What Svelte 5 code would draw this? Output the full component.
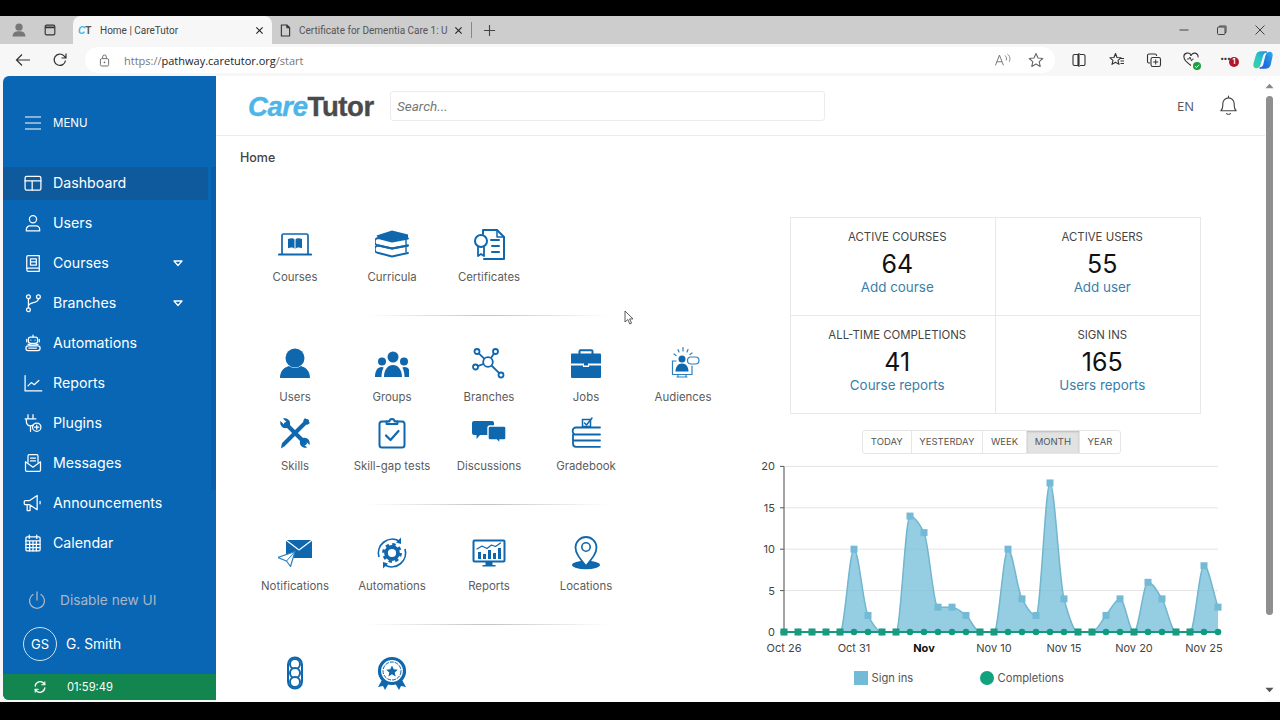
<script>
  const B = '#0f67ae';
  const line = (d, w = 1.8) => `<path d="${d}" fill="none" stroke="${B}" stroke-width="${w}" stroke-linecap="round" stroke-linejoin="round"/>`;
  const fill = (d) => `<path d="${d}" fill="${B}"/>`;
  const wline = (d, w = 1.5) => `<path d="${d}" fill="none" stroke="#fff" stroke-width="${w}" stroke-linecap="round" stroke-linejoin="round"/>`;

  const grid = {
    courses: line('M4 27V8.5a1.5 1.5 0 0 1 1.5-1.5h23a1.5 1.5 0 0 1 1.5 1.5V27', 1.7) + line('M1 27.5h32', 2.2) + fill('M10 12c2.8-1 5.5-1 6.5.6v9.2c-1.2-1.4-3.7-1.6-6.5-.6zM24 12c-2.8-1-5.5-1-6.5.6v9.2c1.2-1.4 3.7-1.6 6.5-.6z'),
    curricula: fill('M1.500 8.500 17 3.500 33 7.500V11L17 14 3 10.500z') + line('M33 11.500 17 14.500 3.500 11a3.400 3.400 0 0 0 0 7.500l13.500 3 16-3', 1.900) + line('M33 18.500 17 21.500 3.500 18.500a3.400 3.400 0 0 0 0 7.500l13.500 3.500 16-3.500', 1.900) + line('M31 12v6M31 19v6', 1.400),
    certificates: line('M11 7V3h14l7 7v22H12', 2) + line('M25 3v7h7', 1.5) + `<circle cx="9" cy="14" r="6" fill="none" stroke="${B}" stroke-width="2"/>` + line('M6 20v9l3-2 3 2v-9', 1.8) + line('M19 13h8M20 19h7M20 25h7', 2),
    users: `<circle cx="17" cy="11" r="9.500" fill="${B}"/>` + fill('M2 31c0-7 4-10.500 9-12 3.500 2.500 8.500 2.500 12 0 5 1.500 9 5 9 12z'),
    groups: `<circle cx="18" cy="10" r="5.500" fill="${B}"/><circle cx="7" cy="14.500" r="4" fill="${B}"/><circle cx="29" cy="14.500" r="4" fill="${B}"/>` + fill('M9 30c0-7.500 4-12 9-12s9 4.500 9 12zM0 30c0-6 2.500-10 6.500-10 1 0 1.500.2 2.200.6C7 23.500 6.500 27 6.500 30zM36 30c0-6-2.500-10-6.500-10-1 0-1.500.2-2.200.6C29 23.500 29.500 27 29.500 30z'),
    branches: `<g fill="none" stroke="${B}" stroke-width="1.800"><circle cx="16" cy="15" r="4.800"/><circle cx="5" cy="4.500" r="2.500"/><circle cx="23.500" cy="4.500" r="2.500"/><circle cx="3.500" cy="20" r="2.500"/><circle cx="29" cy="28" r="2.500"/><path d="M6.800 6.300 12.500 11.800M22 6.600 19 11M6 19.200 11.300 17M19.500 18.500 27.200 26.200"/></g>`,
    jobs: line('M10.500 7V4.200a1 1 0 0 1 1-1h11a1 1 0 0 1 1 1V7', 2) + fill('M2 7.500a1 1 0 0 1 1-1h28a1 1 0 0 1 1 1v9H2zM2 18.500h12v1.500h6v-1.500h12v11.500a1 1 0 0 1-1 1H3a1 1 0 0 1-1-1z') + `<rect x="15" y="15" width="4" height="3.500" fill="${B}"/>`,
    audiences: `<g fill="none" stroke="#2f7fbc" stroke-width="1.200" stroke-linecap="round"><path d="M10 14H6.500v13.500h19.500V19M12 27.500v2.500h8v-2.500M11 30h10"/><rect x="21.500" y="10" width="11.500" height="7" rx="3.500" fill="#fff"/><path d="M8 7 10 8.500M12 2.500l1 2.500M17 .5v3.500M22 2.500 21 5M26 6l-2 1.500"/></g><circle cx="16" cy="12" r="3.500" fill="${B}"/>` + fill('M9.500 24.500c0-4.500 2.500-8 6.500-8s6.500 3.500 6.500 8z'),
    skills: line('M29 5 6 28', 4) + fill('M3 32.500 4 27l3 3z') + `<path d="M27 2l5 5-3 2-4-4z" fill="${B}"/>` + line('M8 8 27 27', 4) + `<path d="M5 2.500 8.500 6 6 8.500 2.500 5C1.500 8 3.500 13 9 12l3-3c1-5.500-4-7.500-7-6.500zM31.500 29 27.500 25l-2.500 2.500 4 4c-3 1-8-1-7-6.500l3-3c5.500-1 7.500 4 6.500 7.500z" fill="${B}"/>`,
    tests: `<rect x="4.500" y="5.500" width="25" height="26" rx="2.500" fill="none" stroke="${B}" stroke-width="2"/><path d="M11.500 8V5.500H14.500a2.500 2.500 0 0 1 5 0H22.500V8z" fill="#fff" stroke="${B}" stroke-width="1.800" stroke-linejoin="round"/>` + line('M11 19.500l4.500 4.500 8-9', 2.2),
    discussions: fill('M2 5h18a2 2 0 0 1 2 2v10a2 2 0 0 1-2 2H8l-3.500 4v-4H2a2 2 0 0 1-2-2V7a2 2 0 0 1 2-2z') + `<path d="M18 10h14a2 2 0 0 1 2 2v10a2 2 0 0 1-2 2h-4v3.500L24.500 24H18a2 2 0 0 1-2-2V12a2 2 0 0 1 2-2z" fill="${B}" stroke="#fff" stroke-width="1.400"/>`,
    gradebook: line('M31 11.500H7a3.300 3.300 0 0 0-3.300 3.300v.4A3.300 3.300 0 0 0 7 18.500h24M4 18.500h27M4 18.500v9.300a3 3 0 0 0 3 3h24M4 24.500h27', 1.8) + `<rect x="13.500" y="3.500" width="8" height="7" fill="none" stroke="${B}" stroke-width="1.500"/>` + line('M15.500 7l2 2 5.500-7', 1.5),
    notifications: fill('M8 4h26v18H8z') + wline('M8.500 4.500 21 14 33.500 4.500', 1.2) + `<path d="M0 21.500 17 15.500 12.500 30.500 8.500 25z" fill="#fff" stroke="#2f7fbc" stroke-width="1.200" stroke-linejoin="round"/>` + `<path d="M8.500 25 17 15.500" stroke="#2f7fbc" stroke-width="1"/>`,
    automations: `<g fill="none" stroke="${B}"><circle cx="17" cy="17" r="8.600" stroke-width="2.600" stroke-dasharray="3.400 3.350"/><circle cx="17" cy="17" r="6" stroke-width="3.800"/><path d="M4 21A13.800 13.800 0 0 1 24 5M30 13A13.800 13.800 0 0 1 10 29" stroke-width="1.700"/></g>` + fill('M26 1.500V8l-5-1.500zM8 32.500V26l5 1.500z'),
    reports: `<rect x="1.500" y="4.500" width="31" height="21" rx="1" fill="none" stroke="${B}" stroke-width="2"/>` + fill('M13.500 26h7v3h3v1.500h-13V29h3zM6 16h3v7H6zM11 18h3v5h-3zM16 14h3v9h-3zM21 17h3v6h-3zM26 12h3v11h-3z') + line('M5 13l5-3 5 2.500 4.500-3.500 4 1.500 5-3.500', 1.2),
    locations: `<ellipse cx="17" cy="29" rx="14" ry="4.200" fill="${B}"/><path d="M17 30C10 21.500 6.500 17 6.500 11.500a10.500 10.500 0 0 1 21 0C27.500 17 24 21.500 17 30z" fill="#fff" stroke="${B}" stroke-width="1.800" stroke-linejoin="round"/><circle cx="17" cy="11" r="4.200" fill="none" stroke="${B}" stroke-width="1.600"/>`,
    chain: `<rect x="10" y="1.500" width="14" height="31" rx="7" fill="none" stroke="${B}" stroke-width="2"/><g fill="#fff" stroke="${B}" stroke-width="2"><circle cx="17" cy="8" r="5"/><circle cx="17" cy="17" r="5"/><circle cx="17" cy="26" r="5"/></g>`,
    badge: fill('M7 24 3 31l5-1 2 4 4-7zM27 24l4 7-5-1-2 4-4-7z') + `<circle cx="17" cy="15" r="12.500" fill="#fff" stroke="${B}" stroke-width="3.200"/><circle cx="17" cy="15" r="9" fill="none" stroke="${B}" stroke-width="1" stroke-dasharray="4 1"/><polygon points="17,9.500 18.700,13.300 22.800,13.700 19.700,16.400 20.600,20.500 17,18.300 13.400,20.500 14.300,16.400 11.200,13.700 15.300,13.300" fill="${B}"/>`
  };

  const sections = [
    [['courses', 'Courses'], ['curricula', 'Curricula'], ['certificates', 'Certificates']],
    [['users', 'Users'], ['groups', 'Groups'], ['branches', 'Branches'], ['jobs', 'Jobs'], ['audiences', 'Audiences'], ['skills', 'Skills'], ['tests', 'Skill-gap tests'], ['discussions', 'Discussions'], ['gradebook', 'Gradebook']],
    [['notifications', 'Notifications'], ['automations', 'Automations'], ['reports', 'Reports'], ['locations', 'Locations']],
    [['chain', ''], ['badge', '']]
  ];

  const nav = [
    { label: 'Dashboard', active: true, icon: '<rect x="2.500" y="4" width="19" height="16.500" rx="2"/><path d="M2.500 9.500h19M11 9.500v11"/>' },
    { label: 'Users', icon: '<circle cx="12" cy="7.500" r="4.300"/><path d="M4 21.500v-1.700a4.300 4.300 0 0 1 4.300-4.300h7.400a4.300 4.300 0 0 1 4.300 4.300v1.700z"/>' },
    { label: 'Courses', caret: true, icon: '<path d="M4.500 19V4.500a1.500 1.500 0 0 1 1.500-1.500h13.500v15H6.500a2 2 0 0 0 0 4h13v-4"/><path d="M9 7h7v7.500H9zM9 10.700h7"/>' },
    { label: 'Branches', caret: true, icon: '<circle cx="6.500" cy="4.500" r="2.300"/><circle cx="18.500" cy="4.500" r="2.300"/><circle cx="6.500" cy="20" r="2.300"/><path d="M6.500 6.800v10.900M18.500 6.800c0 6-12 3.500-12 9"/>' },
    { label: 'Automations', icon: '<rect x="6.500" y="5" width="11" height="7.500" rx="2.500"/><path d="M12 5V2.500M4.500 7.500v3M19.500 7.500v3M9.500 8.500h.01M14.500 8.500h.01M6 13.500c2 1.500 10 1.500 12 0"/><rect x="3.500" y="15.500" width="17" height="5.500" rx="2.700"/><path d="M7 18.200h10" stroke-dasharray="1.500 1"/>' },
    { label: 'Reports', icon: '<path d="M2.500 3v18.500h20M6 15.500l4-4 3.500 2.500 5.500-5"/>' },
    { label: 'Plugins', icon: '<path d="M6 2v4.500M12 2v4.500M2.500 7h13M4 7v3.500a5 5 0 0 0 5 5 5 5 0 0 0 3-1M9 15.500V22"/><circle cx="16.500" cy="17" r="5"/><path d="M16.500 14.500v5M14 17h5"/>' },
    { label: 'Messages', icon: '<path d="M6 11V3.500A1.500 1.500 0 0 1 7.500 2h9A1.500 1.500 0 0 1 18 3.500V11M9 6h6M9 9.500h6"/><path d="M3 10.500v10a1.500 1.500 0 0 0 1.500 1.500h15a1.500 1.500 0 0 0 1.500-1.500v-10L12 17z"/>' },
    { label: 'Announcements', icon: '<path d="M3 9h5l9-6v17l-9-6H3a1.500 1.500 0 0 1-1.500-1.500v-2A1.500 1.500 0 0 1 3 9zM5 14.500V21h3.500v-6.500M20.500 10v3"/>' },
    { label: 'Calendar', icon: '<rect x="3.500" y="4.500" width="17" height="17" rx="1.500"/><path d="M7.500 2.500v4M16.500 2.500v4M3.500 9.500h17M3.500 13.500h17M3.500 17.500h17M8 9.500v12M12 9.500v12M16 9.500v12"/>' }
  ];

  const stats = [
    ['ACTIVE COURSES', '64', 'Add course'],
    ['ACTIVE USERS', '55', 'Add user'],
    ['ALL-TIME COMPLETIONS', '41', 'Course reports'],
    ['SIGN INS', '165', 'Users reports']
  ];
  const ranges = ['TODAY', 'YESTERDAY', 'WEEK', 'MONTH', 'YEAR'];

  // chart
  const vals = [0,0,0,0,0,10,2,0,0,14,12,3,3,2,0,0,10,4,2,18,4,0,0,2,4,0,6,4,0,0,8,3];
  const X0 = 24, STEP = 14, Y0 = 174, UNIT = 8.28;
  const px = (i) => X0 + i * STEP;
  const py = (v) => Y0 - v * UNIT;
  const pts = vals.map((v, i) => [px(i), py(v)]);

  function monotone(p) {
    const n = p.length;
    const d = [], m = [];
    for (let i = 0; i < n - 1; i++) d[i] = (p[i + 1][1] - p[i][1]) / (p[i + 1][0] - p[i][0]);
    m[0] = d[0];
    m[n - 1] = d[n - 2];
    for (let i = 1; i < n - 1; i++) m[i] = d[i - 1] * d[i] <= 0 ? 0 : (2 * d[i - 1] * d[i]) / (d[i - 1] + d[i]);
    let s = `M${p[0][0]} ${p[0][1]}`;
    for (let i = 0; i < n - 1; i++) {
      const h = (p[i + 1][0] - p[i][0]) / 3;
      s += `C${p[i][0] + h} ${p[i][1] + m[i] * h} ${p[i + 1][0] - h} ${p[i + 1][1] - m[i + 1] * h} ${p[i + 1][0]} ${p[i + 1][1]}`;
    }
    return s;
  }
  const curve = monotone(pts);
  const area = `${curve}L${px(31)} ${Y0}L${X0} ${Y0}Z`;
  const yTicks = [0, 5, 10, 15, 20];
  const xTicks = [[0, 'Oct 26'], [5, 'Oct 31'], [10, 'Nov'], [15, 'Nov 10'], [20, 'Nov 15'], [25, 'Nov 20'], [30, 'Nov 25']];
</script>

<div class="screen">
  <div class="tabstrip">
    <svg class="cicon profile" viewBox="0 0 20 20"><circle cx="10" cy="6.500" r="4.500" fill="#777"/><path d="M2 18c0-5 3.500-6.500 8-6.500s8 1.500 8 6.500z" fill="#777"/></svg>
    <svg class="cicon tabs-btn" viewBox="0 0 16 16"><rect x="2.500" y="2.500" width="11" height="11" rx="1.500" fill="none" stroke="#333" stroke-width="1.300"/><path d="M2.500 5h11" stroke="#333" stroke-width="2"/></svg>
    <div class="tab active">
      <span class="fav"><i>C</i>T</span>
      <span class="tabtitle">Home | CareTutor</span>
      <svg class="close" viewBox="0 0 10 10"><path d="M1.500 1.500l7 7M8.500 1.500l-7 7" stroke="#222" stroke-width="1.200"/></svg>
    </div>
    <div class="tab second">
      <svg class="doc" viewBox="0 0 12 14"><path d="M1.500 1h6l3 3v9h-9zM7.500 1v3h3" fill="none" stroke="#333" stroke-width="1.200" stroke-linejoin="round"/></svg>
      <span class="tabtitle fade">Certificate for Dementia Care 1: U</span>
      <svg class="close" viewBox="0 0 10 10"><path d="M1.500 1.500l7 7M8.500 1.500l-7 7" stroke="#222" stroke-width="1.200"/></svg>
    </div>
    <span class="sep"></span>
    <svg class="plus" viewBox="0 0 14 14"><path d="M7 1v12M1 7h12" stroke="#444" stroke-width="1.200"/></svg>
    <div class="winctl">
      <svg viewBox="0 0 12 12"><path d="M1.500 6h9" stroke="#444" stroke-width="1"/></svg>
      <svg viewBox="0 0 12 12"><path d="M3.500 3V2h6.500v6.500H9" fill="none" stroke="#444"/><rect x="1.500" y="3" width="7.500" height="7.500" rx="1" fill="none" stroke="#444"/></svg>
      <svg viewBox="0 0 12 12"><path d="M1.500 1.500l9 9M10.500 1.500l-9 9" stroke="#444" stroke-width="1"/></svg>
    </div>
  </div>

  <div class="toolbar">
    <svg class="tbtn back" viewBox="0 0 16 16"><path d="M15 8H1.500M7 2.500 1.500 8 7 13.500" fill="none" stroke="#333" stroke-width="1.200"/></svg>
    <svg class="tbtn reload" viewBox="0 0 16 16"><path d="M13.500 8.500A5.700 5.700 0 1 1 12 3.800L14 6M14 1.500V6H9.500" fill="none" stroke="#333" stroke-width="1.200"/></svg>
    <div class="address">
      <svg class="lock" viewBox="0 0 12 14"><rect x="1.500" y="5" width="9" height="8" rx="1.500" fill="none" stroke="#666" stroke-width="1"/><path d="M4 5V3a2 2 0 0 1 4 0v2" fill="none" stroke="#666"/><circle cx="6" cy="9" r="1" fill="#666"/></svg>
      <span class="url">https://<b>pathway.caretutor.org</b>/start</span>
      <svg class="tbtn ra" viewBox="0 0 18 16"><path d="M.5 14 5 2.500 9.500 14M2.200 10h5.600" fill="none" stroke="#777" stroke-width="1.100"/><path d="M11 3c2 1 2.500 3.500 1.500 5.500M14 1.500c3 2 3.500 5.500 2 8.500" fill="none" stroke="#777"/></svg>
      <svg class="tbtn st" viewBox="0 0 16 16"><path d="M8 1.500 10 6l4.800.5-3.600 3.200 1 4.800L8 12l-4.200 2.500 1-4.800L1.200 6.500 6 6z" fill="none" stroke="#666" stroke-width="1.100" stroke-linejoin="round"/></svg>
    </div>
    <div class="tools">
      <svg class="ti" viewBox="0 0 16 16"><path d="M7 2.500H3.500a1.500 1.500 0 0 0-1.500 1.500v8a1.500 1.500 0 0 0 1.500 1.500H7zM9 2.500h3.500A1.500 1.500 0 0 1 14 4v8a1.500 1.500 0 0 1-1.500 1.500H9M8 1v14" fill="none" stroke="#333" stroke-width="1.100"/></svg>
      <svg class="ti" viewBox="0 0 16 16"><path d="M6.500 1.500 8 5.500l4 .3L9 8.400l1 4L6.500 10.200 3 12.400l1-4L1 5.800l4-.3z" fill="none" stroke="#333" stroke-width="1.100" stroke-linejoin="round"/><path d="M11 6.500h4M11.500 9h3.500M11.500 11.500h3.500" stroke="#333"/></svg>
      <svg class="ti" viewBox="0 0 16 16"><path d="M4 11H3a1.500 1.500 0 0 1-1.500-1.500v-6A1.500 1.500 0 0 1 3 2h6a1.500 1.500 0 0 1 1.500 1.500V4" fill="none" stroke="#333" stroke-width="1.100"/><rect x="5" y="5.500" width="9.500" height="9" rx="1.800" fill="none" stroke="#333" stroke-width="1.100"/><path d="M9.700 7.500v5M7.200 10h5" stroke="#333"/></svg>
      <span class="health">
        <svg class="ti" viewBox="0 0 16 16"><path d="M8 13.500C3 10 1 8 1 5.300A3.300 3.300 0 0 1 8 4a3.300 3.300 0 0 1 7 1.300" fill="none" stroke="#333" stroke-width="1.100"/><path d="M4 7h2l1-2 1.500 4 1-2h1" fill="none" stroke="#333" stroke-width=".9"/></svg>
        <svg class="okbadge" viewBox="0 0 8 8"><circle cx="4" cy="4" r="4" fill="#1f9d3f"/><path d="M2 4.200l1.500 1.400L6 2.800" fill="none" stroke="#fff"/></svg>
      </span>
      <span class="more">
        <span class="dots">···</span>
        <span class="redbadge">1</span>
      </span>
      <svg class="copilot" viewBox="0 0 20 20">
        <defs>
          <linearGradient id="cpa" x1="1" y1="0" x2="0" y2="1"><stop offset="0" stop-color="#1f8fe0"/><stop offset=".5" stop-color="#2cc3c8"/><stop offset="1" stop-color="#38d39a"/></linearGradient>
          <linearGradient id="cpb" x1="1" y1="0" x2="0" y2="1"><stop offset="0" stop-color="#2ca8ea"/><stop offset=".6" stop-color="#1f74e0"/><stop offset="1" stop-color="#2b58d8"/></linearGradient>
        </defs>
        <path d="M12 18H7c2 0 3.500-1.500 4-3.500L13 6c.5-2 2-3.500 4-3.500 1.800 0 2.300 2 1.800 4L17 14.500C16.500 16.500 14.500 18 12 18z" fill="url(#cpb)" stroke="url(#cpb)" stroke-width="1.400" stroke-linejoin="round"/>
        <path d="M8 2h5.500c-2 0-3.500 1.500-4 3.500L7 14c-.5 2-2 3.500-4 3.500-1.800 0-2.300-2-1.800-4L3.500 5.500C4 3.500 5.500 2 8 2z" fill="url(#cpa)" stroke="url(#cpa)" stroke-width="1.400" stroke-linejoin="round"/>
      </svg>
    </div>
  </div>

  <div class="page">
    <aside class="sidebar">
      <div class="menu-row">
        <svg class="burger" viewBox="0 0 16 14"><path d="M0 1h16M0 7h16M0 13h16" stroke="#fff" stroke-width="1.100"/></svg>
        <span>MENU</span>
      </div>
      <nav>
        {#each nav as item}
          <div class="item" class:active={item.active}>
            <svg class="nicon" viewBox="0 0 24 24" fill="none" stroke="#fff" stroke-width="1.500" stroke-linecap="round" stroke-linejoin="round">{@html item.icon}</svg>
            <span class="nlabel">{item.label}</span>
            {#if item.caret}
              <svg class="caret" viewBox="0 0 10 7"><path d="M1 1h8L5 5.500z" fill="none" stroke="#fff" stroke-width="1.300" stroke-linejoin="round"/></svg>
            {/if}
          </div>
        {/each}
        <span class="navbar-thumb"></span>
      </nav>
      <div class="disable">
        <svg viewBox="0 0 20 20" fill="none" stroke="#a9b6c6" stroke-width="1.300" stroke-linecap="round"><path d="M6 4.500a7.500 7.500 0 1 0 8 0M10 2v8"/></svg>
        <span>Disable new UI</span>
      </div>
      <div class="user">
        <span class="avatar">GS</span>
        <span>G. Smith</span>
      </div>
      <div class="session">
        <svg viewBox="0 0 16 16" fill="none" stroke="#fff" stroke-width="1.500" stroke-linecap="round"><path d="M2.500 7A5.700 5.700 0 0 1 12.500 4l1 1M13.500 9A5.700 5.700 0 0 1 3.500 12l-1-1"/><path d="M13.500 2v3.500H10M2.500 14v-3.500H6" stroke-width="1.200"/></svg>
        <span>01:59:49</span>
      </div>
    </aside>

    <main class="main">
      <header class="header">
        <div class="logo"><i>Care</i><span>Tutor</span></div>
        <div class="search">Search...</div>
        <span class="lang">EN</span>
        <svg class="bell" viewBox="0 0 20 22"><path d="M2 16.500c1.500-1.500 2-3 2-5.500V9a6 6 0 0 1 12 0v2c0 2.500.5 4 2 5.500zM10 3V1.200M8 19.500c1 1 3 1 4 0" fill="none" stroke="#444" stroke-width="1.200" stroke-linejoin="round" stroke-linecap="round"/></svg>
      </header>
      <div class="crumb">Home</div>
      <div class="content">
        <section class="shortcuts">
          {#each sections as group, g}
            {#if g > 0}<div class="rule"></div>{/if}
            <div class="cells">
              {#each group as [key, label]}
                <div class="cell">
                  <svg class="gicon" viewBox="0 0 34 34">{@html grid[key]}</svg>
                  {#if label}<span>{label}</span>{/if}
                </div>
              {/each}
            </div>
          {/each}
        </section>

        <section class="right">
          <div class="stats">
            {#each stats as [title, num, link]}
              <div class="stat">
                <div class="st-title">{title}</div>
                <div class="st-num">{num}</div>
                <div class="st-link">{link}</div>
              </div>
            {/each}
          </div>
          <div class="ranges">
            {#each ranges as r}
              <span class="range" class:on={r === 'MONTH'}>{r}</span>
            {/each}
          </div>
          <svg class="chart" width="480" height="200" viewBox="0 0 480 200">
            {#each yTicks as t}
              {#if t > 0}<line x1={X0} x2="458" y1={py(t)} y2={py(t)} stroke="#e4e4e4" />{/if}
              <line x1={X0 - 4} x2={X0} y1={py(t)} y2={py(t)} stroke="#555" />
              <text x={X0 - 9} y={py(t) + 4} text-anchor="end" class="axis">{t}</text>
            {/each}
            <path d={area} fill="#72bcd8" fill-opacity=".75" />
            <path d={curve} fill="none" stroke="#72b6d0" stroke-width="1.500" />
            <line x1={X0} x2={X0} y1={py(20)} y2={Y0} stroke="#666" stroke-width="1.200" />
            <line x1={X0} x2={px(31)} y1={Y0} y2={Y0} stroke="#149a7e" stroke-width="2" />
            {#each vals as v, i}
              <circle cx={px(i)} cy={Y0} r="3.300" fill="#119b7c" />
              <rect x={px(i) - 3.500} y={py(v) - 3.500} width="7" height="7" fill={v === 0 ? '#1a9a80' : '#72bad5'} />
            {/each}
            {#each xTicks as [i, t]}
              <text x={px(i)} y="194" text-anchor="middle" class="axis" class:bold={t === 'Nov'}>{t}</text>
            {/each}
          </svg>
          <div class="legend">
            <span class="lg-item si"><i class="sq"></i>Sign ins</span>
            <span class="lg-item"><i class="dot"></i>Completions</span>
          </div>
        </section>
      </div>
      <svg class="cursor" viewBox="0 0 10 15"><path d="M1 1v11l2.800-2.500 2 4.500 1.800-.8-2-4.300H9z" fill="#fff" stroke="#333" stroke-width=".8" stroke-linejoin="round"/></svg>
    </main>
    <div class="scrollbar">
      <svg viewBox="0 0 10 6"><path d="M5 0.500 9.500 5.500H.5z" fill="#888"/></svg>
      <span class="thumb"></span>
      <svg viewBox="0 0 10 6"><path d="M5 5.500 9.500.5H.5z" fill="#555"/></svg>
    </div>
  </div>
  <div class="bottom"></div>
</div>

<style>
  :global(body) { margin: 0; background: #000; overflow: hidden; }
  .screen {
    width: 1280px; height: 720px; background: #000; padding-top: 16px; box-sizing: border-box;
    display: flex; flex-direction: column; font-family: Inter, "Open Sans", sans-serif; color: #444; overflow: hidden;
  }
  svg { display: block; flex: none; }

  .tabstrip { height: 28px; background: #cdcdcd; display: flex; align-items: center; flex: none; }
  .cicon.profile { width: 16px; height: 16px; margin-left: 11px; }
  .cicon.tabs-btn { width: 14px; height: 14px; margin-left: 16px; }
  .tab { display: flex; align-items: center; height: 28px; box-sizing: border-box; font-family: Roboto, sans-serif; font-size: 10px; color: #444; }
  .tab.active { width: 199px; margin-left: 16px; background: #f7f7f7; border-radius: 8px 8px 0 0; padding: 0 8px 0 5px; }
  .fav { width: 22px; font-family: "Liberation Sans", sans-serif; font-weight: 700; font-size: 10px; color: #555; }
  .fav i { color: #4db5e8; }
  .tabtitle { flex: 1; white-space: nowrap; }
  .fade { color: #555; }
  .close { width: 9px; height: 9px; margin-left: 4px; }
  .tab.second { width: 193px; padding: 0 2px 0 8px; }
  .doc { width: 11px; height: 13px; margin-right: 8px; }
  .sep { width: 1px; height: 16px; background: #888; margin-left: 6px; }
  .plus { width: 13px; height: 13px; margin-left: 11px; }
  .winctl { margin-left: auto; display: flex; gap: 26px; padding-right: 14px; }
  .winctl svg { width: 12px; height: 12px; }

  .toolbar { height: 32px; background: #f7f7f7; display: flex; align-items: center; flex: none; }
  .tbtn { width: 16px; height: 16px; }
  .back { margin-left: 15px; }
  .reload { margin-left: 21px; }
  .address { width: 970px; height: 26px; margin-left: 17px; background: #fff; border-radius: 13px; display: flex; align-items: center; box-sizing: border-box; padding-left: 14px; }
  .lock { width: 11px; height: 13px; }
  .url { font-family: "Open Sans", sans-serif; font-size: 11px; color: #777; margin-left: 14px; flex: 1; }
  .url b { font-weight: 400; color: #222; }
  .ra { width: 16px; margin-right: 17px; }
  .st { margin-right: 11px; }
  .tools { display: flex; align-items: center; margin-left: 16px; }
  .ti { width: 16px; height: 16px; }
  .tools > * { margin-right: 21px; }
  .tools > :first-child { margin-right: 22px; }
  .health { position: relative; }
  .okbadge { position: absolute; width: 8px; height: 8px; right: -2px; bottom: -2px; }
  .more { position: relative; width: 16px; height: 16px; }
  .dots { font-size: 13px; font-weight: 700; color: #333; line-height: 12px; display: block; letter-spacing: -1px; }
  .redbadge { position: absolute; left: 9px; top: 5px; width: 10px; height: 10px; border-radius: 50%; background: #b3162a; color: #fff; font-size: 7px; line-height: 10px; text-align: center; font-weight: 700; }
  .tools .copilot { width: 20px; height: 20px; margin-right: 0; margin-left: -4px; }

  .page { height: 626px; flex: none; background: #f7f7f7; padding-left: 3px; display: flex; box-sizing: border-box; position: relative; }
  .sidebar { width: 213px; height: 624px; background: #0866b5; border-radius: 6px 0 0 6px; color: #fff; display: flex; flex-direction: column; flex: none; overflow: hidden; }
  .menu-row { height: 91px; flex: none; display: flex; align-items: center; padding: 2px 0 0 22px; font-size: 11.500px; font-weight: 400; box-sizing: border-box; }
  .burger { width: 16px; height: 14px; margin-right: 12px; }
  nav { position: relative; flex: none; }
  .item { width: 205px; height: 33px; margin-bottom: 7px; display: flex; align-items: center; padding: 0 0 2px 20px; box-sizing: border-box; position: relative; }
  .item.active { background: #0f5a9d; }
  .nicon { width: 20px; height: 20px; margin-right: 10px; }
  .nlabel { font-size: 14.200px; color: #fff; }
  .caret { width: 10px; height: 7px; position: absolute; left: 170px; top: 13px; }
  .navbar-thumb { position: absolute; right: 0; top: 0; width: 5px; height: 323px; background: #0a5ea9; }
  .disable { height: 24px; margin-top: 21px; display: flex; align-items: center; padding-left: 24px; color: #a9b6c6; font-size: 13.700px; flex: none; }
  .disable svg { width: 20px; height: 20px; margin-right: 13px; }
  .user { height: 34px; margin-top: 15px; display: flex; align-items: center; padding-left: 20px; font-size: 13.800px; flex: none; }
  .avatar { width: 34px; height: 34px; border: 1px solid #cfe2f2; border-radius: 50%; box-sizing: border-box; display: flex; align-items: center; justify-content: center; font-size: 13px; margin-right: 9px; }
  .session { margin-top: auto; height: 26px; background: #12864e; display: flex; align-items: center; padding-left: 30px; font-size: 11.200px; flex: none; }
  .session svg { width: 14px; height: 14px; margin-right: 20px; }

  .main { width: 1049px; background: #fff; flex: none; position: relative; overflow: hidden; }
  .header { height: 60px; box-sizing: border-box; border-bottom: 1px solid #ececec; display: flex; align-items: center; padding-left: 32px; }
  .logo { font-family: "Liberation Sans", sans-serif; font-weight: 700; font-size: 27.500px; letter-spacing: -.4px; width: 142px; flex: none; padding-top: 3px; -webkit-text-stroke: .4px; }
  .logo i { color: #4db5e8; -webkit-text-stroke-color: #4db5e8; }
  .logo span { color: #4a4a4a; -webkit-text-stroke-color: #4a4a4a; }
  .search { width: 435px; height: 30px; box-sizing: border-box; border: 1px solid #ececec; border-radius: 3px; font-style: italic; color: #777; font-size: 13.500px; line-height: 28px; padding-left: 6px; font-family: Roboto, sans-serif; }
  .lang { margin-left: 352px; font-size: 13px; color: #555; font-family: "Open Sans", sans-serif; }
  .bell { width: 19px; height: 21px; margin-left: 25px; }
  .crumb { height: 81px; box-sizing: border-box; padding: 14px 0 0 24px; font-size: 12.500px; font-weight: 500; color: #444; line-height: 16px; }
  .content { display: flex; }
  .shortcuts { width: 485px; margin-left: 30.500px; padding-top: 10px; flex: none; }
  .cells { display: flex; flex-wrap: wrap; width: 485px; }
  .cell { width: 97px; height: 69px; display: flex; flex-direction: column; align-items: center; font-size: 11.400px; color: #5c5c5c; line-height: 16px; white-space: nowrap; }
  .gicon { width: 34px; height: 34px; margin-bottom: 8px; }
  .rule { width: 240px; height: 1px; margin: 19px 0 31px 121.500px; background: linear-gradient(90deg, #fff, #c4c4c4 50%, #fff); }
  .right { flex: none; width: 532px; }
  .stats { margin-left: 58.500px; width: 411px; height: 197px; box-sizing: border-box; border: 1px solid #e8e8e8; display: grid; grid-template-columns: 1fr 1fr; grid-template-rows: 98px 97px; }
  .stat { text-align: center; box-sizing: border-box; padding: 11px 0 0 9px; }
  .stat:nth-child(odd) { border-right: 1px solid #e8e8e8; }
  .stat:nth-child(-n+2) { border-bottom: 1px solid #e8e8e8; }
  .st-title { font-size: 11.400px; font-weight: 400; color: #444; line-height: 16px; }
  .st-num { font-size: 25px; line-height: 30px; color: #111; margin-top: 4px; }
  .st-link { font-size: 13.400px; color: #3a7fab; line-height: 16px; }
  .ranges { margin: 16px 0 0 130.500px; display: flex; width: max-content; border: 1px solid #e6e6e6; border-radius: 3px; height: 24px; box-sizing: border-box; }
  .range { font-size: 9.500px; color: #555; line-height: 22px; padding: 0 7.800px; border-right: 1px solid #e6e6e6; }
  .range:last-child { border-right: 0; }
  .range.on { background: #e2e2e2; box-shadow: inset 0 1px 2px #bbb; }
  .chart { margin: 4px 0 0 28px; }
  .axis { font-size: 11px; fill: #444; font-family: Inter, sans-serif; }
  .bold { font-weight: 700; fill: #111; }
  .legend { display: flex; margin: 13px 0 0 122px; font-size: 11.200px; color: #555; }
  .lg-item { display: flex; align-items: center; }
  .lg-item.si { width: 126px; }
  .sq { width: 14px; height: 14px; background: #72bad5; margin-right: 4px; }
  .dot { width: 14px; height: 14px; background: #12a37e; border-radius: 50%; margin-right: 4px; }
  .cursor { position: absolute; left: 408px; top: 234px; width: 10px; height: 15px; }

  .scrollbar { width: 15px; background: #fff; flex: none; display: flex; flex-direction: column; align-items: center; padding: 7px 6px 0 0; box-sizing: border-box; height: 624px; }
  .scrollbar svg { width: 9px; height: 6px; }
  .thumb { width: 7px; height: 519px; background: #8f8f8f; border-radius: 4px; margin-top: 7px; margin-bottom: auto; }
  .scrollbar svg:last-child { margin-bottom: 7px; }
  .bottom { flex: 1; background: #000; }
</style>
